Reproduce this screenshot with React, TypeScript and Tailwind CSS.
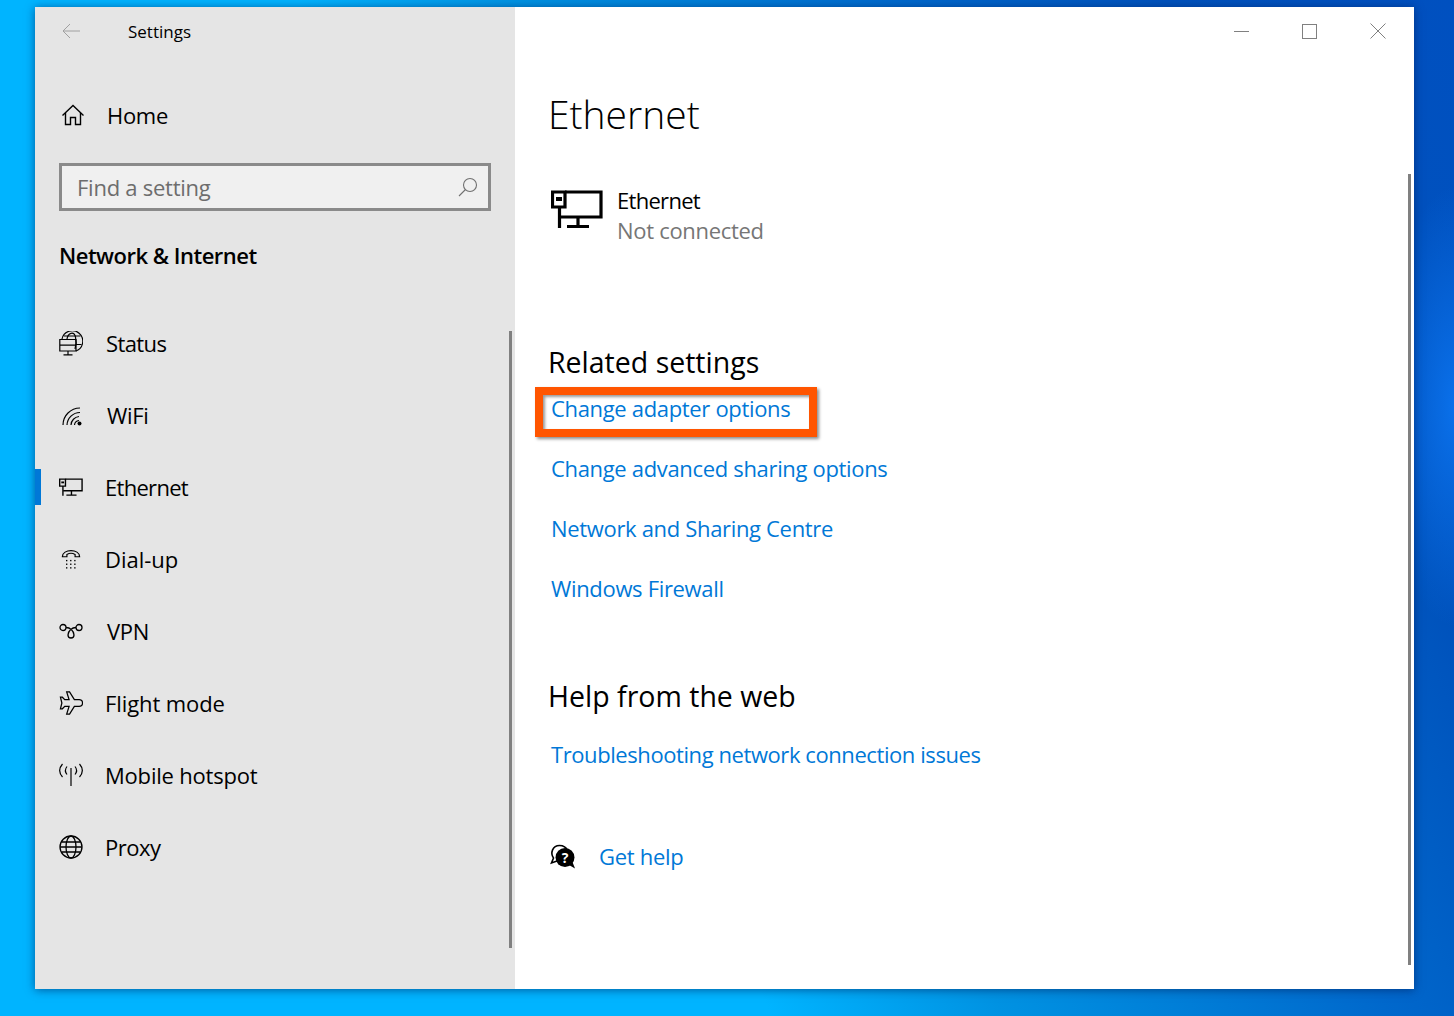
import React from 'react';

const HomeIcon = () => (
  <svg width="24" height="24" viewBox="0 0 24 24" fill="none" stroke="#000" strokeWidth="1.4">
    <path d="M1.5 12.5 L12 2.5 L22.5 12.5" />
    <path d="M4.5 10 V21.5 H9.5 V14.5 H14.5 V21.5 H19.5 V10" />
  </svg>
);

const EthernetIcon = ({ width, height, sw }: { width: number; height: number; sw: number }) => (
  <svg width={width} height={height} viewBox="0 0 52 38" fill="none" stroke="#000" strokeWidth={sw}>
    <path d="M14 2 H50 V27 H9" />
    <path d="M1.5 2 H14 V17 H1.5 Z" />
    <path d="M8.5 17 V38 M27 27 V37 M16 36.5 H38" />
    <rect x="5" y="7" width="6" height="4" fill="#000" stroke="none" />
  </svg>
);

const StatusIcon = () => (
  <svg width="24" height="25" viewBox="0 0 24 25" fill="none" stroke="#000" strokeWidth="1.2">
    <path d="M3 8 A10.5 10.5 0 1 1 17 20" />
    <path d="M8 8 C9 1.5 15 0 16.5 6 C17.5 10 17 15 16 18" />
    <path d="M5 5 H21.5 M17 13.5 H22.5" />
    <path d="M0.8 8.5 H17 V20 H0.8 Z M0.8 14.2 H17 M9 20 V23.5 M4.5 23.8 H13.5" />
  </svg>
);

const WifiIcon = () => (
  <svg width="24" height="24" viewBox="0 0 24 24" fill="none" stroke="#000" strokeWidth="1.2">
    <path d="M4 22 A17 17 0 0 1 21 5" />
    <path d="M8 22 A13 13 0 0 1 21 9.5" />
    <path d="M12 22 A9 9 0 0 1 20 13.5" />
    <path d="M15.5 22 A5 5 0 0 1 20 17.5" />
    <circle cx="20.5" cy="20.5" r="2" fill="#000" stroke="none" />
  </svg>
);

const DialIcon = () => (
  <svg width="20" height="20" viewBox="0 0 22 22" fill="none" stroke="#000" strokeWidth="1.3">
    <path d="M1.5 8.5 C1.5 -0.5 20.5 -0.5 20.5 8.5 H15.5 V6 C13 4.5 9 4.5 6.5 6 V8.5 Z" />
    <g fill="#000" stroke="none">
      <rect x="5.5" y="12" width="1.5" height="1.5" />
      <rect x="10" y="12" width="1.5" height="1.5" />
      <rect x="14.5" y="12" width="1.5" height="1.5" />
      <rect x="5.5" y="16" width="1.5" height="1.5" />
      <rect x="10" y="16" width="1.5" height="1.5" />
      <rect x="14.5" y="16" width="1.5" height="1.5" />
      <rect x="5.5" y="20" width="1.5" height="1.5" />
      <rect x="10" y="20" width="1.5" height="1.5" />
      <rect x="14.5" y="20" width="1.5" height="1.5" />
    </g>
  </svg>
);

const VpnIcon = () => (
  <svg width="24" height="16" viewBox="0 0 24 16" fill="none" stroke="#000" strokeWidth="1.3">
    <circle cx="4" cy="4.5" r="3" />
    <circle cx="20" cy="4.5" r="3" />
    <path d="M7 4.5 C11 4.5 15 8 15 12 A3 3 0 0 1 9 12 C9 8 13 4.5 17 4.5" />
  </svg>
);

const PlaneIcon = () => (
  <svg width="24" height="24" viewBox="0 0 25 25" fill="none" stroke="#000" strokeWidth="1.3" strokeLinejoin="miter">
    <path d="M8 1 H11 L16 9 H21 C23.5 9 24.5 11 24.5 12.5 C24.5 14 23.5 16 21 16 H16 L11 24 H8 L10.5 16 H6 L3.5 18.5 H1.5 L3 12.5 L1.5 6.5 H3.5 L6 9 H10.5 Z" />
  </svg>
);

const HotspotIcon = () => (
  <svg width="24" height="24" viewBox="0 0 24 24" fill="none" stroke="#000" strokeWidth="1.2">
    <path d="M12 5 V23" />
    <path d="M3.5 1 C0 5 0 10 3.5 14 M20.5 1 C24 5 24 10 20.5 14" />
    <path d="M8 3.5 C6 6 6 9 8 11.5 M16 3.5 C18 6 18 9 16 11.5" />
  </svg>
);

const GlobeIcon = () => (
  <svg width="24" height="24" viewBox="0 0 24 24" fill="none" stroke="#000" strokeWidth="1.3">
    <circle cx="12" cy="12" r="11" />
    <ellipse cx="12" cy="12" rx="5" ry="11" />
    <path d="M1 12 H23 M2.5 7 H21.5 M2.5 17 H21.5" />
  </svg>
);

const HelpIcon = () => (
  <svg width="27" height="25" viewBox="0 0 27 25" fill="none">
    <path d="M8 17 L2.5 19 L4.5 14 C1 9 3.5 1.5 10.5 1.5 C15 1.5 17.5 4 18.5 6.5" stroke="#000" strokeWidth="1.6" />
    <circle cx="16" cy="13.5" r="9.5" fill="#000" />
    <path d="M20 21 L26 24.5 L23.5 18 Z" fill="#000" />
    <text x="16" y="18.5" textAnchor="middle" fontSize="14" fontWeight="700" fill="#fff" fontFamily="Open Sans, sans-serif">?</text>
  </svg>
);

const navItems = [
  { label: 'Status', icon: <StatusIcon />, textClass: 'pl-[23px] tracking-[-0.6px]' },
  { label: 'WiFi', icon: <WifiIcon />, textClass: 'pl-[24px]' },
  { label: 'Ethernet', icon: <EthernetIcon width={24} height={18} sw={3} />, textClass: 'pl-[22px] tracking-[-0.7px]', active: true },
  { label: 'Dial-up', icon: <DialIcon />, textClass: 'pl-[22px] tracking-[0px]' },
  { label: 'VPN', icon: <VpnIcon />, textClass: 'pl-[24px]' },
  { label: 'Flight mode', icon: <PlaneIcon />, textClass: 'pl-[22px] tracking-[-0.1px]' },
  { label: 'Mobile hotspot', icon: <HotspotIcon />, textClass: 'pl-[22px] tracking-[-0.2px]' },
  { label: 'Proxy', icon: <GlobeIcon />, textClass: 'pl-[22px] tracking-[-0.5px]' },
];

const links = ['Change adapter options', 'Change advanced sharing options', 'Network and Sharing Centre', 'Windows Firewall'];

export default function App() {
  return (
    <div className="w-[1454px] h-[1016px] overflow-hidden pt-[7px] pl-[35px] bg-[radial-gradient(ellipse_70px_220px_at_100%_40%,#0a70ea,transparent),linear-gradient(65deg,#00b4ff_0%,#00b4ff_40%,#0092e2_52%,#0068cc_72%,#0052bc_85%,#0050c0_100%)] font-['Open_Sans',sans-serif] tracking-[-0.3px]">
      <div className="relative flex w-[1379px] h-[982px] bg-white shadow-[0_1px_9px_rgba(0,30,90,0.6)]">
        {/* Sidebar */}
        <div className="relative w-[480px] h-full bg-[#e5e5e5] flex flex-col">
          <div className="flex items-center h-[48px] pl-[27px]">
            <svg width="18" height="16" viewBox="0 0 18 16" fill="none" stroke="#a0a0a0" strokeWidth="1">
              <path d="M18 8 H1 M8 1 L1 8 L8 15" />
            </svg>
            <span className="ml-[48px] mt-[2px] text-[17px] tracking-normal text-black">Settings</span>
          </div>

          <div className="flex items-center h-[72px] pl-[26px] mt-[24px]">
            <HomeIcon />
            <span className="ml-[22px] text-[22px] text-black">Home</span>
          </div>

          <div className="mx-[24px] mt-[12px] h-[48px] w-[432px] border-[3px] border-[#8a8a8a] bg-[#f0f0f0] flex items-center justify-between pl-[15px] pr-[10px]">
            <span className="text-[22px] tracking-[-0.25px] text-[#6d6d6d]">Find a setting</span>
            <svg width="20" height="20" viewBox="0 0 20 20" fill="none" stroke="#707070" strokeWidth="1.1">
              <circle cx="12" cy="8" r="6.5" />
              <path d="M7.5 12.5 L1 19" />
            </svg>
          </div>

          <div className="pl-[24px] mt-[26px] text-[22px] font-semibold tracking-[-0.5px] text-black leading-[36px]">Network &amp; Internet</div>

          <div className="mt-[34px] flex flex-col">
            {navItems.map((item) => (
              <div key={item.label} className="relative flex items-center h-[72px] pl-[24px]">
                {item.active && <div className="absolute left-0 top-[18px] w-[6px] h-[36px] bg-[#0078d7]" />}
                <div className="w-[24px] flex items-center justify-center shrink-0">{item.icon}</div>
                <span className={`${item.textClass} text-[22px] text-black`}>{item.label}</span>
              </div>
            ))}
          </div>

          <div className="absolute right-[3px] top-[324px] w-[3px] h-[617px] bg-[#808080]" />
        </div>

        {/* Content */}
        <div className="flex-1 h-full pl-[33px]">
          <div className="flex justify-end items-center h-[48px] gap-[53px] pr-[28px]">
            <div className="w-[15px] h-px bg-[#808080]" />
            <div className="w-[15px] h-[15px] border border-[#808080]" />
            <svg width="16" height="16" viewBox="0 0 16 16" stroke="#808080" strokeWidth="1">
              <path d="M0.5 0.5 L15.5 15.5 M15.5 0.5 L0.5 15.5" />
            </svg>
          </div>

          <h1 className="mt-[29px] text-[39px] tracking-normal leading-[60px] text-black font-light">Ethernet</h1>

          <div className="flex mt-[46px] pl-[3px]">
            <EthernetIcon width={52} height={38} sw={3.2} />
            <div className="ml-[14px] -mt-[5px]">
              <div className="text-[22px] tracking-[-0.7px] leading-[30px] text-black">Ethernet</div>
              <div className="text-[22px] leading-[30px] text-[#767676]">Not connected</div>
            </div>
          </div>

          <h2 className="mt-[97px] text-[28.5px] tracking-normal leading-[40px] text-black font-normal">Related settings</h2>

          <div className="flex flex-col pl-[3px] mt-[10px]">
            {links.map((link, i) => (
              <div key={link} className="relative h-[60px] flex items-start">
                <a className="text-[22px] tracking-[-0.33px] leading-[32px] text-[#0078d7]">{link}</a>
                {i === 0 && (
                  <div className="absolute -left-[16px] -top-[5px] w-[282px] h-[50px] border-[8px] border-[#ff5500] shadow-[2px_2px_3px_rgba(0,0,0,0.45),inset_2px_2px_3px_rgba(0,0,0,0.4)]" />
                )}
              </div>
            ))}
          </div>

          <h2 className="mt-[44px] text-[28.5px] tracking-normal leading-[40px] text-black font-normal">Help from the web</h2>

          <a className="block mt-[22px] pl-[3px] text-[22px] tracking-[-0.42px] leading-[32px] text-[#0078d7]">Troubleshooting network connection issues</a>

          <div className="flex items-center mt-[70px] pl-[1px]">
            <HelpIcon />
            <a className="ml-[23px] text-[22px] tracking-[-0.3px] leading-[32px] text-[#0078d7]">Get help</a>
          </div>
        </div>

        <div className="absolute right-[3px] top-[167px] w-[3px] h-[791px] bg-[#808080]" />
      </div>
    </div>
  );
}
